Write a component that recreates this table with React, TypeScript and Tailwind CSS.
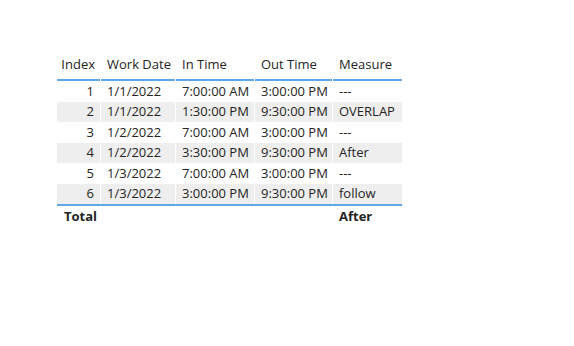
const rows = [
  { index: 1, date: "1/1/2022", inTime: "7:00:00 AM", outTime: "3:00:00 PM", measure: "---" },
  { index: 2, date: "1/1/2022", inTime: "1:30:00 PM", outTime: "9:30:00 PM", measure: "OVERLAP" },
  { index: 3, date: "1/2/2022", inTime: "7:00:00 AM", outTime: "3:00:00 PM", measure: "---" },
  { index: 4, date: "1/2/2022", inTime: "3:30:00 PM", outTime: "9:30:00 PM", measure: "After" },
  { index: 5, date: "1/3/2022", inTime: "7:00:00 AM", outTime: "3:00:00 PM", measure: "---" },
  { index: 6, date: "1/3/2022", inTime: "3:00:00 PM", outTime: "9:30:00 PM", measure: "follow" },
];

const cols = "grid grid-cols-[43px_74px_78px_77px_69px] gap-x-px";

export default function App() {
  return (
    <div className="h-[346px] w-[574px] bg-white pl-[57px] pt-[54px] font-['Open_Sans',sans-serif] text-[13px] text-[#252423]">
      <div className="w-[345px]">
        <div className={`${cols} h-[27px]`}>
          {["Index", "Work Date", "In Time", "Out Time", "Measure"].map((h, i) => (
            <div key={h} className="flex h-full flex-col justify-between">
              <span className={`leading-[20px] ${i === 0 ? "pr-[5px] text-right" : "pl-[6px]"}`}>{h}</span>
              <div className="h-[2px] w-full bg-[#5ea7e8]" />
            </div>
          ))}
        </div>
        {rows.map((r) => (
          <div
            key={r.index}
            className={`${cols} h-[20.5px] items-center`}
          >
            {[String(r.index), r.date, r.inTime, r.outTime, r.measure].map((v, i) => (
              <span
                key={i}
                className={`flex h-full items-center ${i === 0 ? "justify-end pr-[6px]" : "pl-[6px]"} ${r.index % 2 === 0 ? "bg-[#eeeeee]" : ""}`}
              >
                {v}
              </span>
            ))}
          </div>
        ))}
        <div className="h-[2px] bg-[#5ea7e8]" />
        <div className={`${cols} h-[21px] items-center font-bold`}>
          <span className="pl-[7px]">Total</span>
          <span />
          <span />
          <span />
          <span className="pl-[6px]">After</span>
        </div>
      </div>
    </div>
  );
}
